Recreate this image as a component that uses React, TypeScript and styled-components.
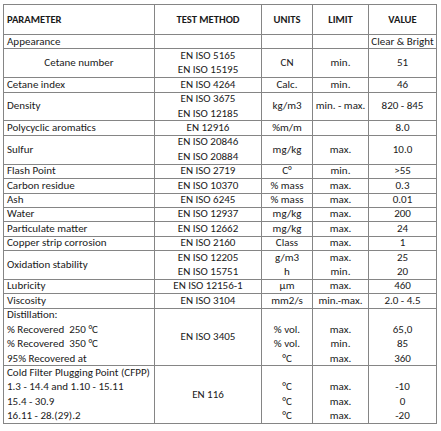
import styled, { createGlobalStyle } from 'styled-components'

const LINE = 14.42

const GlobalStyle = createGlobalStyle`
  html, body {
    margin: 0;
    padding: 0;
    background: #ffffff;
  }
  body {
    font-family: Carlito, Lato, 'Liberation Sans', sans-serif;
    color: #1a1a1a;
  }
`

const Page = styled.div`
  padding: 4px 0 0 3px;
`

const Grid = styled.div<{ $rows: string }>`
  display: inline-grid;
  grid-template-columns: 150px 106px 50px 55px 67px;
  grid-template-rows: ${({ $rows }) => $rows};
  gap: 1px;
  padding: 1px;
  background: #858585;
`

const Cell = styled.div<{ $align?: 'left' | 'center' }>`
  background: #ffffff;
  display: flex;
  flex-direction: column;
  justify-content: center;
  align-items: ${({ $align }) => ($align === 'left' ? 'flex-start' : 'center')};
  padding: 0 ${({ $align }) => ($align === 'left' ? '3px' : '0')};
  font-size: 11px;
  line-height: ${LINE}px;
  white-space: nowrap;
  overflow: visible;
`

const HeadCell = styled(Cell)`
  font-weight: 700;
  font-size: 10.6px;
  padding-top: 2px;
`

const Line = styled.div`
  height: ${LINE}px;
`

type Row = {
  lines: number
  param: string[]
  center?: boolean
  method: string[]
  units: string[]
  limit: string[]
  value: string[]
}

const B = '\u00a0'

const rows: Row[] = [
  { lines: 1, param: ['Appearance'], method: [''], units: [''], limit: [''], value: ['Clear & Bright'] },
  { lines: 2, param: ['Cetane number'], center: true, method: ['EN ISO 5165', 'EN ISO 15195'], units: ['CN'], limit: ['min.'], value: ['51'] },
  { lines: 1, param: ['Cetane index'], method: ['EN ISO 4264'], units: ['Calc.'], limit: ['min.'], value: ['46'] },
  { lines: 2, param: ['Density'], method: ['EN ISO 3675', 'EN ISO 12185'], units: ['kg/m3'], limit: ['min. - max.'], value: ['820 - 845'] },
  { lines: 1, param: ['Polycyclic aromatics'], method: ['EN 12916'], units: ['%m/m'], limit: [''], value: ['8.0'] },
  { lines: 2, param: ['Sulfur'], method: ['EN ISO 20846', 'EN ISO 20884'], units: ['mg/kg'], limit: ['max.'], value: ['10.0'] },
  { lines: 1, param: ['Flash Point'], method: ['EN ISO 2719'], units: ['C°'], limit: ['min.'], value: ['>55'] },
  { lines: 1, param: ['Carbon residue'], method: ['EN ISO 10370'], units: ['% mass'], limit: ['max.'], value: ['0.3'] },
  { lines: 1, param: ['Ash'], method: ['EN ISO 6245'], units: ['% mass'], limit: ['max.'], value: ['0.01'] },
  { lines: 1, param: ['Water'], method: ['EN ISO 12937'], units: ['mg/kg'], limit: ['max.'], value: ['200'] },
  { lines: 1, param: ['Particulate matter'], method: ['EN ISO 12662'], units: ['mg/kg'], limit: ['max.'], value: ['24'] },
  { lines: 1, param: ['Copper strip corrosion'], method: ['EN ISO 2160'], units: ['Class'], limit: ['max.'], value: ['1'] },
  { lines: 2, param: ['Oxidation stability'], method: ['EN ISO 12205', 'EN ISO 15751'], units: ['g/m3', 'h'], limit: ['max.', 'min.'], value: ['25', '20'] },
  { lines: 1, param: ['Lubricity'], method: ['EN ISO 12156-1'], units: ['µm'], limit: ['max.'], value: ['460'] },
  { lines: 1, param: ['Viscosity'], method: ['EN ISO 3104'], units: ['mm2/s'], limit: ['min.-max.'], value: ['2.0 - 4.5'] },
  {
    lines: 4,
    param: ['Distillation:', '% Recovered  250 °C', '% Recovered  350 °C', '95% Recovered at'],
    method: ['EN ISO 3405'],
    units: [B, '% vol.', '% vol.', '°C'],
    limit: [B, 'max.', 'min.', 'max.'],
    value: [B, '65,0', '85', '360'],
  },
  {
    lines: 4,
    param: ['Cold Filter Plugging Point (CFPP)', '1.3 - 14.4 and 1.10 - 15.11', '15.4 - 30.9', '16.11 - 28.(29).2'],
    method: ['EN 116'],
    units: [B, '°C', '°C', '°C'],
    limit: [B, 'max.', 'max.', 'max.'],
    value: [B, '-10', '0', '-20'],
  },
]

const Lines = ({ items }: { items: string[] }) => (
  <>
    {items.map((t, i) => (
      <Line key={i}>{t === '' ? B : t.replace(/ {2}/g, ' \u00a0')}</Line>
    ))}
  </>
)

const App = () => {
  const template = ['29px', ...rows.map((r) => `${(r.lines * LINE - 1).toFixed(2)}px`)].join(' ')

  return (
    <Page>
      <GlobalStyle />
      <Grid $rows={template}>
        <HeadCell $align="left">PARAMETER</HeadCell>
        <HeadCell>TEST METHOD</HeadCell>
        <HeadCell>UNITS</HeadCell>
        <HeadCell>LIMIT</HeadCell>
        <HeadCell>VALUE</HeadCell>
        {rows.map((r, i) => (
          <>
            <Cell key={`p${i}`} $align={r.center ? 'center' : 'left'}>
              <Lines items={r.param} />
            </Cell>
            <Cell key={`m${i}`}>
              <Lines items={r.method} />
            </Cell>
            <Cell key={`u${i}`}>
              <Lines items={r.units} />
            </Cell>
            <Cell key={`l${i}`}>
              <Lines items={r.limit} />
            </Cell>
            <Cell key={`v${i}`}>
              <Lines items={r.value} />
            </Cell>
          </>
        ))}
      </Grid>
    </Page>
  )
}

export default App
